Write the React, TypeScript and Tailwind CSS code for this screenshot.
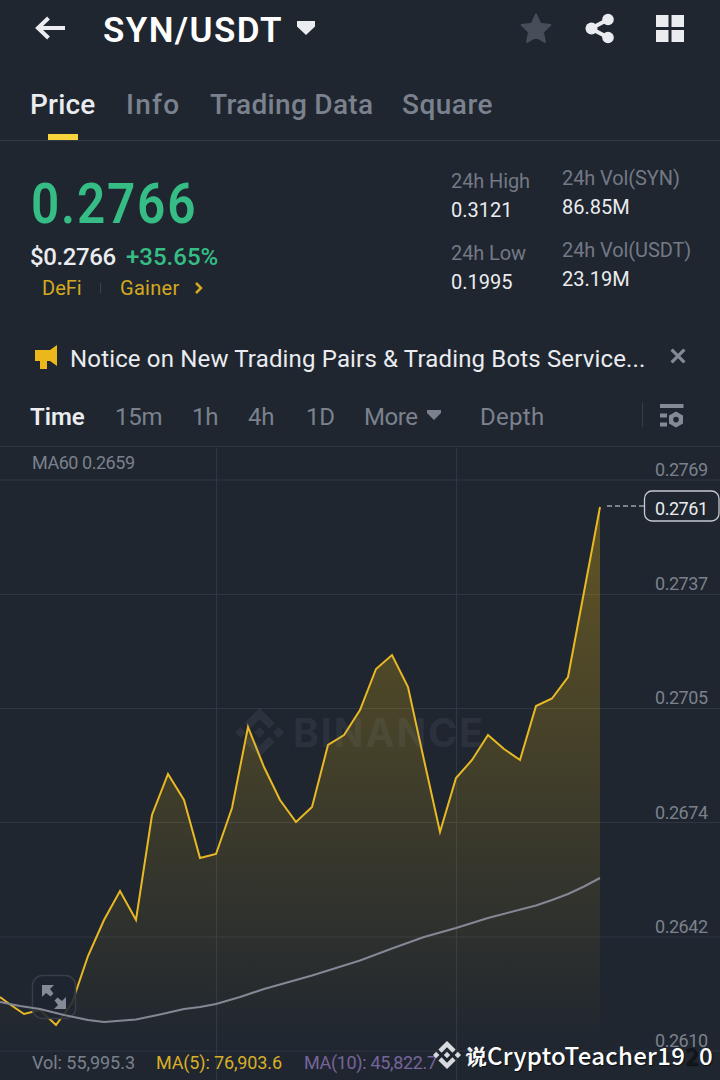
import { clsx } from 'clsx';

const TABS = [
  { label: 'Price', box: 'w-[96px]', track: 'tracking-[0.2px]', active: true },
  { label: 'Info', box: 'w-[84px]', track: 'tracking-[1.3px]' },
  { label: 'Trading Data', box: 'w-[192px]', track: 'tracking-[0.3px]' },
  { label: 'Square', box: 'w-[100px]', track: 'tracking-[0.5px]' },
];

const INTERVALS = [
  { label: '15m', box: 'w-[77px]' },
  { label: '1h', box: 'w-[56px]' },
  { label: '4h', box: 'w-[58px]' },
  { label: '1D', box: 'w-[58px]' },
];

const GRID_Y = [446.5, 480, 594.5, 708.5, 822.5, 937, 1051];
const GRID_X = [216.5, 456.5];

const AXIS = [
  { value: '0.2769', y: 476 },
  { value: '0.2737', y: 590 },
  { value: '0.2705', y: 704 },
  { value: '0.2674', y: 819 },
  { value: '0.2642', y: 933 },
  { value: '0.2610', y: 1047 },
];

const PRICE: [number, number][] = [
  [0, 997], [8, 1003], [24, 1014], [40, 1010], [56, 1025], [72, 1003], [88, 956],
  [104, 920], [120, 891], [136, 920], [152, 815], [168, 774], [184, 800],
  [200, 858], [216, 854], [232, 808], [248, 727], [264, 767], [280, 800],
  [296, 822], [312, 807], [328, 745], [344, 735], [360, 710], [376, 669],
  [392, 655], [408, 687], [424, 760], [440, 832], [456, 778], [472, 760],
  [488, 735], [504, 749], [520, 760], [536, 706], [552, 698.5], [568, 677],
  [584, 592], [600, 507],
];

const MA60: [number, number][] = [
  [0, 1002], [20, 1006], [40, 1009], [64, 1015], [88, 1020], [104, 1022], [136, 1019.5],
  [160, 1014.5], [184, 1009], [200, 1007], [216, 1004], [240, 997], [264, 989],
  [312, 975.5], [360, 960.5], [392, 948.5], [424, 937], [456, 928], [488, 918],
  [536, 905.5], [552, 900], [568, 894], [584, 886.5], [600, 878],
];

const toPoints = (pts: [number, number][]) => pts.map((p) => p.join(',')).join(' ');

function BinanceMark({ className }: { className?: string }) {
  return (
    <svg viewBox="0 0 126.6 126.6" className={className} fill="currentColor">
      <path d="M38.7 53.2 63.3 28.6l24.6 24.6 14.3-14.3L63.3 0 24.4 38.9zM0 63.3 14.3 49l14.3 14.3-14.3 14.3zM38.7 73.4 63.3 98l24.6-24.6 14.3 14.3-38.9 38.9-38.9-38.9zM98 63.3 112.3 49l14.3 14.3-14.3 14.3zM77.8 63.3 63.3 48.8 48.8 63.3l14.5 14.5z" />
    </svg>
  );
}

function Header() {
  return (
    <header className="flex h-[60px] items-center pl-[34px] pr-[36px]">
      <svg width="32" height="24" viewBox="0 0 32 24" className="-mt-1 shrink-0" fill="none" stroke="#eaecef" strokeWidth="4">
        <path d="M31 12H4M14.500 2 4 12l10.500 10" />
      </svg>
      <h1 className="ml-[37px] w-[194px] shrink-0 whitespace-nowrap text-[35px] font-semibold leading-none tracking-[1.400px] text-white">
        SYN/USDT
      </h1>
      <svg width="18" height="14" viewBox="0 0 18 14" className="-mt-1 shrink-0" fill="#eaecef">
        <path d="M0 0h18v5.500L9 14 0 5.500z" />
      </svg>
      <div className="-mt-1 ml-auto flex items-center">
        <svg width="32" height="31" viewBox="0 0 32 31" fill="#474d59" stroke="#474d59" strokeWidth="2" strokeLinejoin="round">
          <path d="m16 1.500 4.200 9.200 10.100 1.200-7.400 7 2 10-8.900-5-8.900 5 2-10-7.400-7 10.100-1.200z" />
        </svg>
        <svg width="30" height="31" viewBox="0 0 30 31" className="ml-[33px]" fill="#eaecef">
          <path d="M23 6.500 6 15.500l17 9" fill="none" stroke="#eaecef" strokeWidth="4" />
          <circle cx="23" cy="6.500" r="5.800" />
          <circle cx="6.500" cy="15.500" r="6" />
          <circle cx="23" cy="24.500" r="5.800" />
        </svg>
        <svg width="28" height="27" viewBox="0 0 28 27" className="ml-[41px]" fill="#eaecef">
          <path d="M0 0h12.500v12H0zM15.500 0H28v12H15.500zM0 15h12.500v12H0zM15.500 15H28v12H15.500z" />
        </svg>
      </div>
    </header>
  );
}

function Stat({ label, value, className }: { label: string; value: string; className?: string }) {
  return (
    <div className={clsx('whitespace-nowrap text-xl leading-7', className)}>
      <div className="tracking-[-0.1px] text-[#737985]">{label}</div>
      <div className="pt-px text-[#eaecef]">{value}</div>
    </div>
  );
}

function Chart() {
  return (
    <div className="relative h-[635px]">
      <svg width="720" height="635" viewBox="0 445 720 635" className="block">
        <defs>
          <linearGradient id="area" gradientUnits="userSpaceOnUse" x1="0" y1="507" x2="0" y2="1051">
            <stop offset="0" stopColor="#f0b90b" stopOpacity="0.32" />
            <stop offset="1" stopColor="#f0b90b" stopOpacity="0" />
          </linearGradient>
        </defs>
        <g stroke="#303743" strokeWidth="1.200">
          {GRID_Y.map((y) => (
            <line key={y} x1="0" x2="720" y1={y} y2={y} />
          ))}
          {GRID_X.map((x) => (
            <line key={x} x1={x} x2={x} y1="448" y2="1080" />
          ))}
        </g>
        <polygon points={`${toPoints(PRICE)} 600,1051 0,1051`} fill="url(#area)" />
        <polyline points={toPoints(PRICE)} fill="none" stroke="#e9b924" strokeWidth="2" />

        {/* Expand button sits under the MA line */}
        <rect x="32.500" y="975.500" width="43" height="43" rx="10" fill="#1f2630" fillOpacity="0.88" stroke="#373e49" strokeWidth="1.500" />
        <g fill="#848a96">
          <path d="M42 985h12l-4 4 3.500 4.500-3 3L46 993l-4 4z" />
          <path d="M66 1009H54l4-4-3.500-4.500 3-3L62 1001l4-4z" />
        </g>
        <polyline points={toPoints(MA60)} fill="none" stroke="#848894" strokeWidth="2" strokeLinejoin="round" />

        <line x1="607" x2="645" y1="506" y2="506" stroke="#9ba0a9" strokeWidth="1.500" strokeDasharray="5 3" />
        <rect x="644.500" y="491" width="74.500" height="30" rx="7.500" fill="#1f2630" stroke="#c5c9d0" strokeWidth="1.300" />
        <g fontSize="18" fill="#7b818c">
          {AXIS.map((a) => (
            <text key={a.value} x="655" y={a.y} textLength="53">
              {a.value}
            </text>
          ))}
          <text x="655" y="515" textLength="53" fill="#eaecef">
            0.2761
          </text>
          <text x="32" y="469" textLength="103">
            MA60 0.2659
          </text>
          <text x="32" y="1069" textLength="103">
            Vol: 55,995.3
          </text>
          <text x="156" y="1069" textLength="126" fill="#d9ae27">
            MA(5): 76,903.6
          </text>
          <text x="304" y="1069" textLength="133" fill="#77649b">
            MA(10): 45,822.7
          </text>
        </g>
      </svg>

      <div className="absolute left-[235px] top-[263px] flex items-center text-[#858c98] opacity-[0.12]">
        <BinanceMark className="h-[49px] w-[49px]" />
        <span className="ml-[9px] font-[Inter] text-[39px] font-bold leading-none tracking-[2px]">BINANCE</span>
      </div>

      <div className="absolute left-[433px] top-[592px] flex h-9 items-center whitespace-nowrap font-['Noto_Sans_CJK_SC',sans-serif] text-2xl font-medium leading-none text-white [text-shadow:1px_1px_1px_#00000090]">
        <BinanceMark className="h-7 w-7 text-[#d8dade]" />
        <span className="ml-[5px] w-[21px] text-[21px] [text-shadow:1px_1px_0_#111,-1px_1px_0_#ddd]">说</span>
        <span className="w-[198px] tracking-[0.300px]">CryptoTeacher19</span>
        <span className="w-[14px] text-[#12161d]">2</span>
        <span>0</span>
      </div>
    </div>
  );
}

export default function App() {
  return (
    <div className="h-[1080px] w-[720px] overflow-hidden bg-[#1f2630] font-[Roboto,sans-serif] text-[#eaecef]">
      <Header />

      <nav className="flex h-[81px] items-start border-b border-[#343b47] pl-[30px] pt-[27px] text-[28px] font-medium leading-9">
        {TABS.map((tab) => (
          <div
            key={tab.label}
            className={clsx('flex shrink-0 flex-col whitespace-nowrap', tab.box, tab.track, tab.active ? 'text-[#eaecef]' : 'text-[#7b818d]')}
          >
            {tab.label}
            {tab.active && <span className="ml-[18px] mt-[11px] h-1.5 w-[30px] bg-[#f8d33a]" />}
          </div>
        ))}
      </nav>

      <section className="flex h-[187px] items-start pl-[30px]">
        <div className="w-[421px] whitespace-nowrap pt-[32px]">
          <div className="ml-px h-[66px] origin-left scale-x-[0.9] text-[55px] font-semibold leading-[62px] tracking-[2px] text-[#35bd85]">0.2766</div>
          <div className="flex h-9 items-center text-2xl font-medium leading-9">
            <span className="w-[96px] tracking-[-0.4px]">$0.2766</span>
            <span className="text-[#35bd85]">+35.65%</span>
          </div>
          <div className="-mt-px flex h-7 items-center pl-3 text-xl text-[#d4a91f]">
            <span className="w-[58px]">DeFi</span>
            <span className="h-2.5 w-px bg-[#3b424e]" />
            <span className="ml-[19px] w-[75px] tracking-[0.3px]">Gainer</span>
            <svg width="8" height="12" viewBox="0 0 8 12" fill="none" stroke="#d4a91f" strokeWidth="2.500">
              <path d="m1 1 5 5-5 5" />
            </svg>
          </div>
        </div>
        <div className="w-[111px] pt-[26px]">
          <Stat label="24h High" value="0.3121" />
          <Stat label="24h Low" value="0.1995" className="mt-[15px]" />
        </div>
        <div className="pt-[23px]">
          <Stat label="24h Vol(SYN)" value="86.85M" />
          <Stat label="24h Vol(USDT)" value="23.19M" className="mt-[15px]" />
        </div>
      </section>

      <div className="flex h-[60px] items-center pl-[35px]">
        <svg width="23" height="25" viewBox="0 0 23 25" className="-mt-px" fill="#ebb71a">
          <path d="M0 5h15l7-5v21l-7-5h-3v8H5v-8H0z" />
        </svg>
        <p className="ml-3 mt-px w-[600px] whitespace-nowrap text-2xl tracking-[0.160px]">
          Notice on New Trading Pairs &amp; Trading Bots Service...
        </p>
        <svg width="16" height="16" viewBox="0 0 15 15" className="-mt-1" fill="none" stroke="#848a96" strokeWidth="3">
          <path d="m1.500 1.500 12 12m0-12-12 12" />
        </svg>
      </div>

      <div className="flex h-[57px] items-center whitespace-nowrap pl-[30px] text-2xl text-[#7b818d]">
        <span className="w-[85px] font-semibold text-[#eaecef]">Time</span>
        {INTERVALS.map((i) => (
          <span key={i.label} className={clsx('tracking-[-0.3px]', i.box)}>
            {i.label}
          </span>
        ))}
        <span className="w-[63px] tracking-[-0.4px]">More</span>
        <svg width="14" height="10" viewBox="0 0 14 10" className="-mt-1" fill="#7b818d">
          <path d="M0 0h14v3L7 10 0 3z" />
        </svg>
        <span className="ml-[39px] w-[162px] tracking-[0.3px]">Depth</span>
        <span className="-mt-1 h-6 w-px bg-[#363d49]" />
        <svg width="24" height="24" viewBox="0 0 24 24" className="-mt-0.5 ml-[17px]" fill="#848a96">
          <path d="M0 0h23.500v4H0zM0 9.500h7v4H0zM0 18.500h7v4H0z" />
          <path fillRule="evenodd" d="m16 7.500 7 4v8l-7 4-7-4v-8zm0 5.300a2.800 2.800 0 1 0 0 5.600 2.800 2.800 0 0 0 0-5.600z" />
        </svg>
      </div>

      <Chart />
    </div>
  );
}
